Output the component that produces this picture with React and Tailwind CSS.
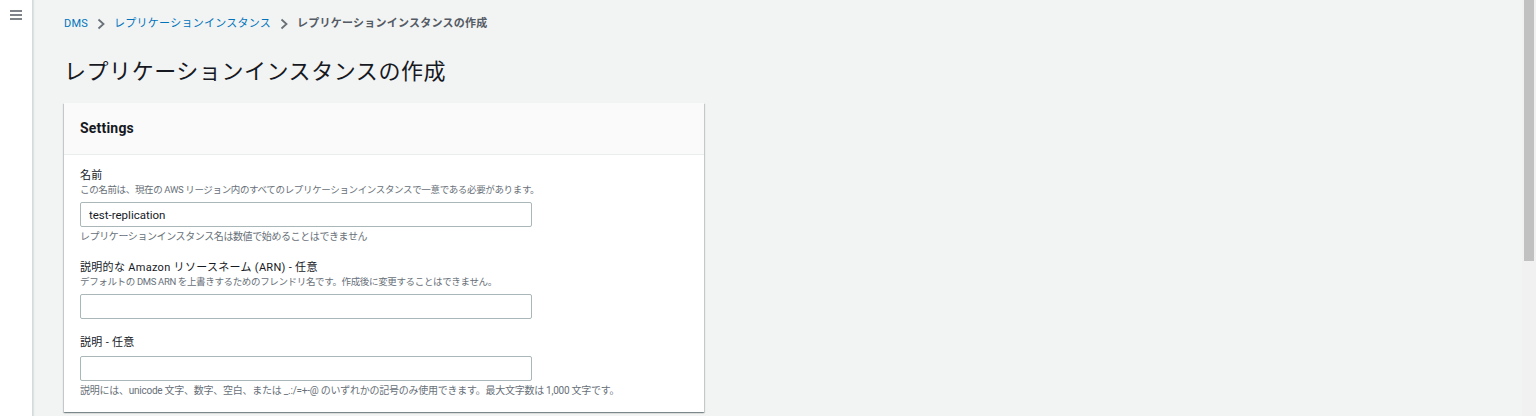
import { useState } from "react";

function Chevron() {
  return (
    <svg viewBox="0 0 10 12" className="w-[10px] h-[12px] mx-[8px] text-[#687078]">
      <path d="M2.5 1.5l5 4.5-5 4.5" fill="none" stroke="currentColor" strokeWidth="1.8" />
    </svg>
  );
}

function Field({ label, desc, hint, hintClass, value, last }) {
  const [v, setV] = useState(value || "");
  return (
    <div className={last ? "" : "mb-[17px]"}>
      <div className="text-[11px] leading-[14px] tracking-[0.3px] text-[#16191f]">{label}</div>
      {desc && (
        <div className="text-[9.5px] leading-[14px] tracking-[-0.35px] text-[#687078]">{desc}</div>
      )}
      <input
        value={v}
        onChange={(e) => setV(e.target.value)}
        className={
          "block w-[452px] h-[25px] border border-[#aab7b8] rounded-[2px] bg-white px-[8px] text-[11.5px] text-[#16191f] outline-none " +
          (desc ? "mt-[5px]" : "mt-[6px]")
        }
      />
      {hint && (
        <div className={"mt-[3px] text-[10px] leading-[14px] text-[#687078] " + hintClass}>{hint}</div>
      )}
    </div>
  );
}

export default function App() {
  return (
    <div className="flex h-[416px] w-full overflow-hidden bg-[#f2f3f3] font-[Roboto,'Noto_Sans_CJK_JP',sans-serif]">
      {/* side nav toggle */}
      <div className="w-[33px] shrink-0 bg-white border-r border-[#d5dbdb] shadow-[1px_0_1px_rgba(0,28,36,0.08)]">
        <svg viewBox="0 0 12 10" className="w-[12px] h-[10px] ml-[10px] mt-[10px] text-[#545b64]">
          <path d="M0 1h12M0 5h12M0 9h12" stroke="currentColor" strokeWidth="1.5" />
        </svg>
      </div>

      {/* content */}
      <div className="flex-1 pl-[31px] pt-[16px]">
        <nav className="flex items-center h-[16px] text-[11px] tracking-[0.25px]">
          <a className="text-[#0073bb]">DMS</a>
          <Chevron />
          <a className="text-[#0073bb]">レプリケーションインスタンス</a>
          <Chevron />
          <span className="text-[#545b64] font-bold">レプリケーションインスタンスの作成</span>
        </nav>

        <h1 className="mt-[24px] h-[32px] leading-[32px] text-[22px] tracking-[0.55px] text-[#16191f]">
          レプリケーションインスタンスの作成
        </h1>

        <div className="mt-[15px] w-[640px] bg-white shadow-[0_1px_1px_0_rgba(0,28,36,0.3),1px_1px_1px_0_rgba(0,28,36,0.15),-1px_1px_1px_0_rgba(0,28,36,0.15)]">
          <div className="h-[52px] flex items-center px-[16px] bg-[#fafafa] border-b border-[#eaeded]">
            <h2 className="text-[14px] tracking-[0.2px] font-bold text-[#16191f]">Settings</h2>
          </div>
          <div className="px-[16px] pt-[14px] pb-[14px]">
            <Field
              label="名前"
              desc="この名前は、現在の AWS リージョン内のすべてのレプリケーションインスタンスで一意である必要があります。"
              value="test-replication"
              hint="レプリケーションインスタンス名は数値で始めることはできません"
              hintClass="tracking-[-0.4px]"
            />
            <Field
              label="説明的な Amazon リソースネーム (ARN) - 任意"
              desc="デフォルトの DMS ARN を上書きするためのフレンドリ名です。作成後に変更することはできません。"
            />
            <Field
              label="説明 - 任意"
              hint="説明には、unicode 文字、数字、空白、または _.:/=+-@ のいずれかの記号のみ使用できます。最大文字数は 1,000 文字です。"
              hintClass="tracking-[-0.25px]"
              last
            />
          </div>
        </div>
      </div>

      {/* scrollbar */}
      <div className="w-[14px] shrink-0 bg-[#f1f1f1] pl-[2px] pr-[2px]">
        <div className="h-[261px] bg-[#c1c1c1]" />
      </div>
    </div>
  );
}
